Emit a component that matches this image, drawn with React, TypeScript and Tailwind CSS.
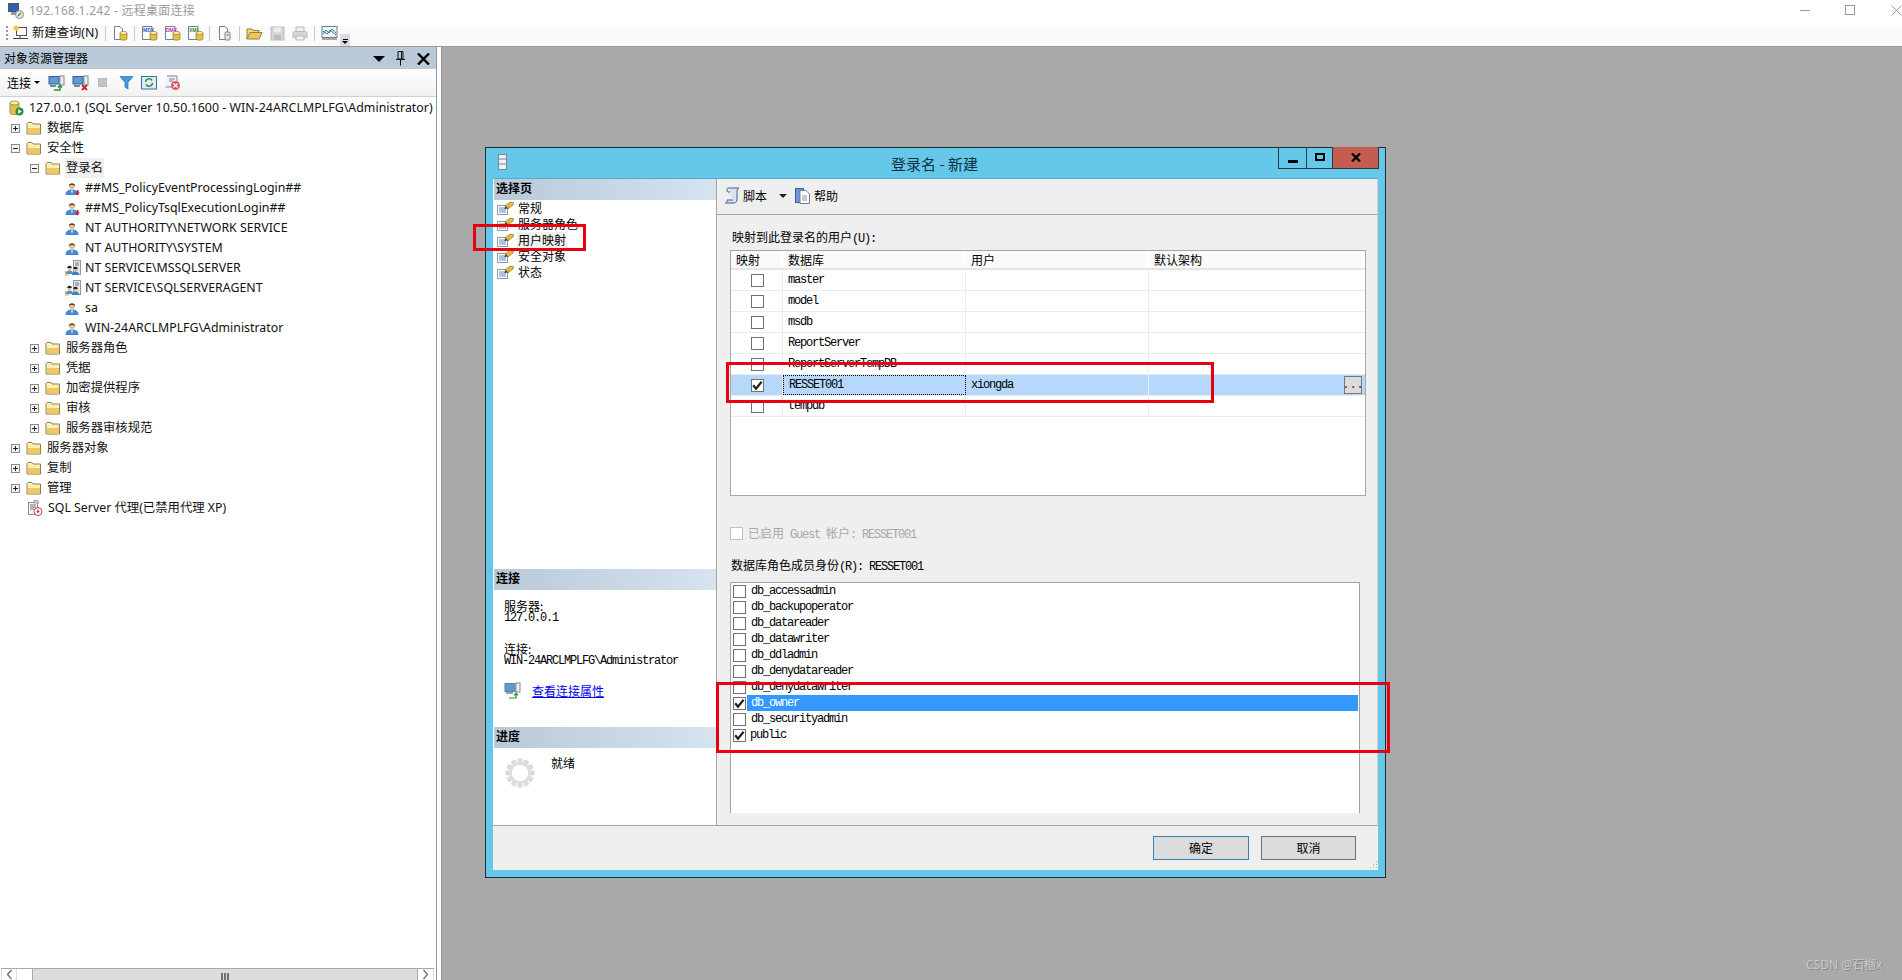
import React from "react";

const CJK = "font-['Noto_Sans_CJK_SC',sans-serif] text-[12px] leading-[16px] text-black";
const TREE = "font-['Noto_Sans','Noto_Sans_CJK_SC',sans-serif] text-[12.35px] leading-[20px] text-[#111] whitespace-nowrap";
const MONO = "font-['Liberation_Mono',monospace] text-[12px] tracking-[-1.2px]";

function Folder() {
  return (
    <svg width="16" height="14" viewBox="0 0 16 14" className="shrink-0">
      <path d="M1 3V2.5L2 1.5H6L7 3H14.5V13H1Z" fill="#fff4c4" stroke="#8f7f45" />
      <rect x="2" y="4" width="12" height="8.5" fill="#eec862" />
      <rect x="2" y="4" width="12" height="3" fill="#fbeeb0" />
    </svg>
  );
}

function Expander({ open }: { open?: boolean }) {
  return (
    <svg width="9" height="9" viewBox="0 0 9 9" className="shrink-0">
      <rect x="0.5" y="0.5" width="8" height="8" fill="#f4f4f4" stroke="#8a8a8a" />
      <path d="M2 4.5H7" stroke="#222" />
      {!open && <path d="M4.5 2V7" stroke="#222" />}
    </svg>
  );
}

function User({ arrow }: { arrow?: boolean }) {
  return (
    <svg width="15" height="15" viewBox="0 0 15 15" className="shrink-0">
      <path d="M1 13.5C1 10 3.5 9 7 9s6 1 6 4.5Z" fill="#3f8fdc" stroke="#2a64a8" strokeWidth="0.7" />
      <path d="M6 9.5L7 12.5L8 9.5Z" fill="#fff" />
      <circle cx="7" cy="5" r="3" fill="#e9b98c" />
      <path d="M3.8 5C3.8 1.5 10.2 1.5 10.2 5L8.5 3.8H5.5Z" fill="#2a1d12" />
      {arrow && <path d="M12 9V11.5H10L12.5 14.5L15 11.5H13.5V9Z" fill="#c8202c" />}
    </svg>
  );
}

function GroupUser() {
  return (
    <svg width="16" height="16" viewBox="0 0 16 16" className="shrink-0">
      <rect x="8.5" y="0.5" width="7" height="14" fill="#e4e8ee" stroke="#8d97a5" />
      <path d="M10 3H14M10 5H14" stroke="#6d7a8a" />
      <path d="M0.5 15V11L0.5 15H4" stroke="#e3b23a" strokeWidth="1.2" fill="none" />
      <path d="M1 14C1 11 3 10.5 4.5 10.5S8 11 8 14Z" fill="#4a93d8" />
      <circle cx="4.5" cy="8" r="2.2" fill="#e9b98c" />
      <path d="M2.3 8C2.3 5 6.7 5 6.7 8Z" fill="#2a1d12" />
      <path d="M7 15C7 12 9 11.5 10.5 11.5S14 12 14 15Z" fill="#3a7fc4" />
      <circle cx="10.5" cy="9" r="2.2" fill="#e9b98c" />
      <path d="M8.3 9C8.3 6 12.7 6 12.7 9Z" fill="#2a1d12" />
    </svg>
  );
}

function ServerIcon() {
  return (
    <svg width="15" height="16" viewBox="0 0 15 16" className="shrink-0">
      <path d="M1 3V13C1 15 10 15 10 13V3Z" fill="#e5c04a" stroke="#94802f" strokeWidth="0.8" />
      <ellipse cx="5.5" cy="3" rx="4.5" ry="2" fill="#fbeeb0" stroke="#94802f" strokeWidth="0.8" />
      <circle cx="10.5" cy="11.5" r="4" fill="#2f8f3a" />
      <path d="M9.2 9.3L12.7 11.5L9.2 13.7Z" fill="#fff" />
    </svg>
  );
}

function AgentIcon() {
  return (
    <svg width="16" height="16" viewBox="0 0 16 16" className="shrink-0">
      <rect x="1.5" y="2.5" width="9" height="12" fill="#f2f2f2" stroke="#8d8d8d" />
      <path d="M3 5H9M3 7H9M3 9H7" stroke="#777" />
      <path d="M7 0.5H11L12 3H7Z" fill="#d8d8d8" stroke="#888" strokeWidth="0.7" />
      <circle cx="11" cy="11.5" r="4" fill="#fff" stroke="#b44" />
      <path d="M11 9V12M9.8 11L11 13L12.2 11Z" fill="#c8202c" stroke="#c8202c" strokeWidth="0.6" />
    </svg>
  );
}

function PageIcon() {
  return (
    <svg width="17" height="14" viewBox="0 0 17 14" className="shrink-0">
      <rect x="0.5" y="4.5" width="10" height="9" fill="#fff" stroke="#8c97a5" />
      <path d="M2 7H9M2 9H9M2 11H9" stroke="#5d88c0" />
      <path d="M8 5L13 1L16.5 1.5L16 4L11 8Z" fill="#e7b83e" stroke="#77683a" strokeWidth="0.6" />
      <path d="M7 8L9 5L11 7.5Z" fill="#444" />
    </svg>
  );
}

function Check() {
  return (
    <svg width="13" height="13" viewBox="0 0 13 13" className="block">
      <path d="M2.2 6.3L5 9.8L10.6 2.8" fill="none" stroke="#222" strokeWidth="2.2" />
    </svg>
  );
}

function Checkbox({ checked, disabled }: { checked?: boolean; disabled?: boolean }) {
  return (
    <span className={`block w-[13px] h-[13px] shrink-0 border bg-white box-border ${disabled ? "border-[#c0c0c0]" : "border-[#707070]"}`}>
      {checked && <span className="block -m-px"><Check /></span>}
    </span>
  );
}

function TreeRow({ indent, icon, text, open, expander, hover }: { indent: number; icon: React.ReactNode; text: string; open?: boolean; expander?: boolean; hover?: boolean }) {
  return (
    <div className="h-[20px] flex items-center" style={{ paddingLeft: indent }}>
      {expander ? <span className="w-[15px] flex items-center"><Expander open={open} /></span> : null}
      {icon}
      <span className={`${TREE} ml-[4px] px-[1px] ${hover ? "bg-[#f0f0f0]" : ""}`}>{text}</span>
    </div>
  );
}

function DocDb() {
  return (
    <svg width="16" height="16" viewBox="0 0 16 16">
      <path d="M2.5 1.5H8L10.5 4V14.5H2.5Z" fill="#fff" stroke="#6d7f95" />
      <path d="M8 8V14C8 15.5 15 15.5 15 14V8Z" fill="#e8c040" stroke="#8c7a30" strokeWidth="0.7" />
      <ellipse cx="11.5" cy="8" rx="3.5" ry="1.6" fill="#fbeeb0" stroke="#8c7a30" strokeWidth="0.7" />
    </svg>
  );
}

function QueryIcon({ label, color }: { label: string; color: string }) {
  return (
    <svg width="17" height="16" viewBox="0 0 17 16">
      <path d="M1.5 1.5H11V14.5H1.5Z" fill="#fff" stroke="#6d7f95" />
      <text x="2" y="7" fontSize="5" fontWeight="700" fill={color} fontFamily="Liberation Sans, sans-serif">{label}</text>
      <path d="M9 8V14C9 15.5 16 15.5 16 14V8Z" fill="#e8c040" stroke="#8c7a30" strokeWidth="0.7" />
      <ellipse cx="12.5" cy="8" rx="3.5" ry="1.6" fill="#fbeeb0" stroke="#8c7a30" strokeWidth="0.7" />
    </svg>
  );
}

function TopToolbar() {
  const Sep = () => <span className="block w-px h-[15px] bg-[#c8c8c8]" />;
  return (
    <div className="h-[20px] bg-[#fafafa] flex items-center relative pb-[6px]">
      <span className="ml-[6px] w-[2px] h-[14px] border-l-2 border-dotted border-[#999]" />
      <svg width="17" height="16" viewBox="0 0 17 16" className="ml-[4px]">
        <rect x="4.5" y="2.5" width="10" height="8" fill="#fff" stroke="#555" />
        <path d="M1 13.5H16M8 11V13" stroke="#444" />
        <circle cx="4" cy="3" r="2.6" fill="#f5c83a" />
      </svg>
      <span className={`${TREE} ml-[3px] leading-[14px]`}>新建查询(N)</span>
      <span className="ml-[7px]"><Sep /></span>
      <span className="ml-[6px] flex"><DocDb /></span>
      <span className="ml-[6px]"><Sep /></span>
      <span className="ml-[6px] flex gap-[6px]">
        <QueryIcon label="MDX" color="#2a58c0" />
        <QueryIcon label="DMX" color="#c02aa8" />
        <QueryIcon label="XML" color="#2a8a40" />
      </span>
      <span className="ml-[5px]"><Sep /></span>
      <svg width="16" height="16" viewBox="0 0 16 16" className="ml-[6px]">
        <path d="M3.5 1.5H9L11.5 4V14.5H3.5Z" fill="#fff" stroke="#6d7f95" />
        <rect x="9" y="7" width="5" height="8" rx="1" fill="#dfe5ec" stroke="#7d8896" />
        <rect x="10.5" y="9" width="2" height="2" fill="#d89a20" />
      </svg>
      <span className="ml-[7px]"><Sep /></span>
      <svg width="17" height="15" viewBox="0 0 17 15" className="ml-[6px]">
        <path d="M1 13V3H6L7 4.5H13V7" fill="#f4d97c" stroke="#8f7f45" />
        <path d="M1 13L4 6.5H16L13 13Z" fill="#f2c75a" stroke="#8f7f45" />
      </svg>
      <svg width="15" height="15" viewBox="0 0 15 15" className="ml-[7px]">
        <rect x="1" y="1" width="13" height="13" fill="#d5d5d5" stroke="#bbb" />
        <rect x="4" y="1.5" width="7" height="5" fill="#eee" />
        <rect x="4" y="9" width="7" height="5" fill="#bdbdbd" />
      </svg>
      <svg width="16" height="15" viewBox="0 0 16 15" className="ml-[7px]">
        <rect x="4" y="1" width="8" height="5" fill="#eee" stroke="#bbb" />
        <rect x="1" y="5.5" width="14" height="6.5" rx="1.5" fill="#d4d4d4" stroke="#bbb" />
        <rect x="4" y="10" width="8" height="4" fill="#f2f2f2" stroke="#bbb" />
      </svg>
      <span className="ml-[6px]"><Sep /></span>
      <svg width="17" height="16" viewBox="0 0 17 16" className="ml-[6px]">
        <rect x="1" y="1.5" width="15" height="11" fill="#f2f6fb" stroke="#6d7f95" />
        <path d="M2 9L5 5L8 8L11 4L15 8" stroke="#2f9a40" fill="none" />
        <path d="M2 6L6 9L9 5L15 10" stroke="#3a6ac0" fill="none" />
        <path d="M1 14H16" stroke="#555" />
      </svg>
      <span className="absolute left-[340px] top-[8px] w-[10px] h-[12px] bg-[#dcdcdc] flex flex-col items-center justify-end pb-[2px]">
        <span className="block w-[5px] h-px bg-black mb-px" />
        <span className="block w-0 h-0 border-x-[3px] border-t-[3px] border-x-transparent border-t-black" />
      </span>
    </div>
  );
}

function ExplorerToolbar() {
  return (
    <div className="h-[28px] bg-linear-to-b from-white to-[#f2f2f2] border-b border-[#d0d0d0] flex items-center pl-[7px]">
      <span className={`${CJK}`}>连接</span>
      <span className="ml-[3px] w-0 h-0 border-x-[3px] border-t-[3px] border-x-transparent border-t-black" />
      <svg width="17" height="16" viewBox="0 0 17 16" className="ml-[8px]">
        <rect x="1" y="1.5" width="10" height="7.5" fill="#5f9ad8" stroke="#3f5f8f" />
        <rect x="12" y="1" width="4" height="9" fill="#eef0f3" stroke="#7d8896" />
        <path d="M2 11H8" stroke="#7d8896" strokeWidth="2" />
        <path d="M6 15H12V11M10 12.5L12 10L14 12.5" stroke="#1f9a30" fill="none" strokeWidth="1.4" />
      </svg>
      <svg width="17" height="16" viewBox="0 0 17 16" className="ml-[7px]">
        <rect x="1" y="1.5" width="10" height="7.5" fill="#5f9ad8" stroke="#3f5f8f" />
        <rect x="12" y="1" width="4" height="9" fill="#eef0f3" stroke="#7d8896" />
        <path d="M2 11H8" stroke="#7d8896" strokeWidth="2" />
        <path d="M10 10L15 15M15 10L10 15" stroke="#d0202c" strokeWidth="1.8" />
      </svg>
      <span className="ml-[9px] w-[9px] h-[9px] bg-[#c4c4c4] border border-[#bbb]" />
      <svg width="15" height="15" viewBox="0 0 15 15" className="ml-[12px]">
        <path d="M1 1.5H14L9 7.5V14L6 12V7.5Z" fill="#3c9ce6" stroke="#2f6fa8" strokeWidth="0.7" />
      </svg>
      <svg width="16" height="15" viewBox="0 0 16 15" className="ml-[7px]">
        <rect x="0.5" y="1.5" width="15" height="12.5" fill="#dcecfa" stroke="#3f6f9f" />
        <path d="M4.5 7A3.5 3.5 0 0 1 11 5.5M11.5 8A3.5 3.5 0 0 1 5 9.5" stroke="#2f8f30" fill="none" strokeWidth="1.5" />
      </svg>
      <svg width="17" height="16" viewBox="0 0 17 16" className="ml-[7px]">
        <path d="M3 1H13V12H1.5" fill="#eef1f5" stroke="#7d8896" />
        <path d="M5 4H11M5 6H9" stroke="#7d8896" />
        <circle cx="11.5" cy="10.5" r="4.5" fill="#e05a62" />
        <path d="M9.5 8.5L13.5 12.5M13.5 8.5L9.5 12.5" stroke="#fff" strokeWidth="1.3" />
      </svg>
    </div>
  );
}

function ObjectExplorer() {
  const logins: [string, React.ReactNode][] = [
    ["##MS_PolicyEventProcessingLogin##", <User arrow />],
    ["##MS_PolicyTsqlExecutionLogin##", <User arrow />],
    ["NT AUTHORITY\\NETWORK SERVICE", <User />],
    ["NT AUTHORITY\\SYSTEM", <User />],
    ["NT SERVICE\\MSSQLSERVER", <GroupUser />],
    ["NT SERVICE\\SQLSERVERAGENT", <GroupUser />],
    ["sa", <User />],
    ["WIN-24ARCLMPLFG\\Administrator", <User />],
  ];
  return (
    <aside className="w-[442px] shrink-0 flex bg-white h-full">
      <div className="w-[437px] border-r border-[#8d99a6] flex flex-col relative">
        <div className="h-[22px] bg-[#b9c9d8] flex items-center pl-[4px] relative pb-[1px]">
          <span className={CJK}>对象资源管理器</span>
          <span className="absolute left-[373px] top-[9px] w-0 h-0 border-x-[6px] border-t-[6px] border-x-transparent border-t-black" />
          <svg width="11" height="16" viewBox="0 0 11 16" className="absolute left-[395px] top-[3px]">
            <path d="M3 1.5H8V9H3ZM1 9.5H10M5.5 10V15.5M6.5 2V9" stroke="#111" fill="none" />
          </svg>
          <svg width="13" height="12" viewBox="0 0 13 12" className="absolute left-[417px] top-[6px]">
            <path d="M1 0.5L12 11.5M12 0.5L1 11.5" stroke="#000" strokeWidth="2.4" />
          </svg>
        </div>
        <ExplorerToolbar />
        <div className="flex flex-col pt-[1px]">
          <div className="h-[20px] flex items-center pl-[9px]">
            <ServerIcon />
            <span className={`${TREE} ml-[5px] tracking-[0.04px]`}>127.0.0.1 (SQL Server 10.50.1600 - WIN-24ARCLMPLFG\Administrator)</span>
          </div>
          <TreeRow indent={11} expander icon={<Folder />} text="数据库" />
          <TreeRow indent={11} expander open icon={<Folder />} text="安全性" />
          <TreeRow indent={30} expander open icon={<Folder />} text="登录名" hover />
          {logins.map(([t, ic]) => (
            <div key={t} className="h-[20px] flex items-center pl-[65px]">
              <span className="w-[15px] flex justify-center">{ic}</span>
              <span className={`${TREE} ml-[5px]`}>{t}</span>
            </div>
          ))}
          {["服务器角色", "凭据", "加密提供程序", "审核", "服务器审核规范"].map((t) => (
            <TreeRow key={t} indent={30} expander icon={<Folder />} text={t} />
          ))}
          {["服务器对象", "复制", "管理"].map((t) => (
            <TreeRow key={t} indent={11} expander icon={<Folder />} text={t} />
          ))}
          <TreeRow indent={27} icon={<AgentIcon />} text="SQL Server 代理(已禁用代理 XP)" />
        </div>
        <div className="absolute left-[1px] right-[2px] bottom-0 h-[12px] flex border-t border-[#a8a8a8] bg-white">
          <span className="w-[16px] border-x border-[#ddd] text-[#666] flex justify-center">
            <svg width="7" height="11" viewBox="0 0 7 11"><path d="M5.5 1L1.5 5.5L5.5 10" stroke="#666" fill="none" strokeWidth="1.2" /></svg>
          </span>
          <span className="w-[15px]" />
          <span className="flex-1 bg-[#dcdcdc] border-x border-[#a8a8a8] flex justify-center items-start pt-[4px] gap-px">
            <span className="w-[2px] h-[8px] bg-[#707070]" />
            <span className="w-[2px] h-[8px] bg-[#707070]" />
            <span className="w-[2px] h-[8px] bg-[#707070]" />
          </span>
          <span className="w-[16px] border-r border-[#ddd] flex justify-center">
            <svg width="7" height="11" viewBox="0 0 7 11"><path d="M1.5 1L5.5 5.5L1.5 10" stroke="#666" fill="none" strokeWidth="1.2" /></svg>
          </span>
        </div>
      </div>
      <div className="w-[4px]" />
      <div className="w-px bg-[#9a9a9a]" />
    </aside>
  );
}

function SectionHeader({ children }: { children: React.ReactNode }) {
  return (
    <div className="h-[21px] shrink-0 bg-linear-to-r from-[#b9c9d8] to-[#d6e3f0] flex items-center pl-[2px] pb-[3px]">
      <span className={`${CJK} font-bold`}>{children}</span>
    </div>
  );
}

function GridRow({ name, user, checked, selected }: { name: string; user?: string; checked?: boolean; selected?: boolean }) {
  const line = "border-r border-[#ececec] h-full flex items-center";
  return (
    <div className={`h-[21px] flex border-b border-[#ececec] ${selected ? "bg-[#b5d8fc]" : ""}`}>
      <div className={`${line} w-[52px] justify-center pl-[2px]`}><Checkbox checked={checked} /></div>
      <div className={`${line} w-[183px] pl-[5px] ${MONO} text-black ${selected ? "border border-dotted border-black" : ""}`}>{name}</div>
      <div className={`${line} w-[183px] pl-[5px] ${MONO} text-black`}>{user}</div>
      <div className="flex-1 h-full flex items-center justify-end pr-[3px]">
        {selected && (
          <span className={`w-[18px] h-[18px] bg-[#dcdcdc] border border-[#777] ${MONO} flex items-center justify-center tracking-[0px] text-[#333]`}>...</span>
        )}
      </div>
    </div>
  );
}

function Dialog() {
  const pages = ["常规", "服务器角色", "用户映射", "安全对象", "状态"];
  const roles = ["db_accessadmin", "db_backupoperator", "db_datareader", "db_datawriter", "db_ddladmin", "db_denydatareader", "db_denydatawriter", "db_owner", "db_securityadmin", "public"];
  return (
    <div className="absolute left-[485px] top-[147px] w-[901px] h-[731px] bg-[#65c8ea] border border-[#1f2d33] flex flex-col">
      <div className="h-[30px] shrink-0 relative flex justify-center items-center">
        <span className="font-['Noto_Sans_CJK_SC',sans-serif] text-[15px] leading-[20px] text-[#10303f] mt-[1px] -ml-[2px]">登录名 - 新建</span>
        <svg width="10" height="16" viewBox="0 0 10 16" className="absolute left-[12px] top-[6px]">
          <rect x="0.5" y="0.5" width="8" height="15" fill="#eef1f5" stroke="#7d8896" />
          <path d="M1 5H8M1 10H8" stroke="#7d8896" />
        </svg>
        <div className="absolute right-[6px] -top-px h-[22px] flex border border-t-0 border-[#2b3a42]">
          <span className="w-[28px] border-r border-[#2b3a42] flex items-end justify-center pb-[5px]">
            <span className="w-[10px] h-[3px] bg-black" />
          </span>
          <span className="w-[26px] border-r border-[#2b3a42] flex items-center justify-center pb-[2px]">
            <span className="w-[10px] h-[8px] border-2 border-black" />
          </span>
          <span className="w-[45px] bg-[#c45c50] flex items-center justify-center">
            <svg width="10" height="9" viewBox="0 0 10 9"><path d="M1 0.5L9 8.5M9 0.5L1 8.5" stroke="#000" strokeWidth="2.2" /></svg>
          </span>
        </div>
      </div>

      <div className="flex-1 mx-[7px] mb-[7px] flex flex-col bg-[#efefef] relative">
        <div className="h-[648px] flex shrink-0 border-t border-[#5aa8c8] border-b-0">
          <div className="w-[224px] shrink-0 bg-white border-r border-b border-[#a6a6a6] flex flex-col pl-px">
            <SectionHeader>选择页</SectionHeader>
            <div className="flex flex-col">
              {pages.map((p, i) => (
                <div key={p} className="h-[16px] flex items-center pl-[3px]">
                  <PageIcon />
                  <span className={`${CJK} ml-[3px] px-[1px] ${i === 2 ? "bg-[#f0f0f0]" : ""}`}>{p}</span>
                </div>
              ))}
            </div>
            <div className="flex-1" />
            <SectionHeader>连接</SectionHeader>
            <div className="h-[137px] shrink-0 pl-[10px] pt-[8px] flex flex-col">
              <span className={`${CJK} h-[13px] leading-[13px]`}>服务器:</span>
              <span className={`${MONO} h-[12px] leading-[12px] text-black mt-[1px]`}>127.0.0.1</span>
              <span className={`${CJK} h-[13px] leading-[13px] mt-[17px]`}>连接:</span>
              <span className={`${MONO} h-[12px] leading-[12px] text-black mt-[1px]`}>WIN-24ARCLMPLFG\Administrator</span>
              <div className="flex items-center mt-[15px]">
                <svg width="17" height="17" viewBox="0 0 17 17">
                  <rect x="1" y="1.5" width="10" height="8" fill="#5f9ad8" stroke="#6c7f95" />
                  <rect x="12" y="1" width="4" height="9" fill="#eef0f3" stroke="#7d8896" />
                  <path d="M2 11H9" stroke="#9aa4af" strokeWidth="2" />
                  <path d="M5 16H12V12M10 13.5L12 11L14 13.5" stroke="#1f9a30" fill="none" strokeWidth="1.2" />
                </svg>
                <a className="ml-[11px] font-['Noto_Sans_CJK_SC',sans-serif] text-[12px] leading-[16px] text-[#0000ee] underline">查看连接属性</a>
              </div>
            </div>
            <SectionHeader>进度</SectionHeader>
            <div className="h-[77px] shrink-0 pl-[11px] pt-[10px] flex items-start">
              <svg width="30" height="30" viewBox="0 0 30 30">
                {Array.from({ length: 12 }).map((_, i) => (
                  <rect key={i} x="12.5" y="0.5" width="5" height="6.5" rx="1" fill="#dcdcdc" transform={`rotate(${i * 30} 15 15)`} />
                ))}
              </svg>
              <span className={`${CJK} ml-[16px] mt-[-3px]`}>就绪</span>
            </div>
          </div>

          <div className="flex-1 min-w-0 flex flex-col border-r border-[#cfcfcf] border-b-[#a6a6a6] border-b">
            <div className="h-[36px] shrink-0 border-b border-[#a6a6a6] flex items-center pl-[7px] pb-[2px]">
              <svg width="17" height="17" viewBox="0 0 17 17">
                <path d="M4 1H15L13 3V13C13 15 11 16 9 16H1.5C3 15.5 3.5 14 3 13H9" fill="#d6e3f2" stroke="#42618c" />
                <path d="M4 1C2.5 1 2.5 4 4 5H6" fill="none" stroke="#42618c" />
              </svg>
              <span className={`${CJK} ml-[2px]`}>脚本</span>
              <span className="ml-[12px] w-0 h-0 border-x-[4px] border-t-[4px] border-x-transparent border-t-[#222]" />
              <svg width="16" height="17" viewBox="0 0 16 17" className="ml-[8px]">
                <rect x="0.5" y="1.5" width="8" height="14" fill="#6f95d8" stroke="#3f5f9c" />
                <path d="M5 3.5H11L14.5 7V16.5H5Z" fill="#fff" stroke="#6d7f95" />
                <path d="M7 9H12M7 11H12M7 13H12" stroke="#8a97a8" />
              </svg>
              <span className={`${CJK} ml-[3px]`}>帮助</span>
            </div>

            <div className="flex-1 flex flex-col pl-[13px]">
              <div className={`${CJK} h-[16px] mt-[15px] pl-[2px] -translate-y-px`}>映射到此登录名的用户<span className={MONO}>(U):</span></div>
              <div className="w-[636px] h-[246px] mt-[4px] bg-white border border-[#a6a6a6] flex flex-col">
                <div className="h-[19px] shrink-0 flex border-b-2 border-[#e5e5e5]">
                  {([["映射", "w-[52px]"], ["数据库", "w-[183px]"], ["用户", "w-[183px]"], ["默认架构", "flex-1"]] as [string, string][]).map(([t, w]) => (
                    <div key={t} className={`${w} bg-[#fafafa] border-r-2 border-white pl-[5px] flex items-center ${CJK}`}>{t}</div>
                  ))}
                </div>
                <GridRow name="master" />
                <GridRow name="model" />
                <GridRow name="msdb" />
                <GridRow name="ReportServer" />
                <GridRow name="ReportServerTempDB" />
                <GridRow name="RESSET001" user="xiongda" checked selected />
                <GridRow name="tempdb" />
              </div>

              <div className="h-[13px] mt-[31px] flex items-center">
                <Checkbox disabled />
                <span className="ml-[5px] font-['Noto_Sans_CJK_SC',sans-serif] text-[12px] leading-[16px] text-[#a8a8a8] whitespace-pre">已启用<span className={MONO}> Guest </span>帐户<span className={MONO}>: RESSET001</span></span>
              </div>
              <div className={`${CJK} h-[16px] mt-[18px] pl-[1px] whitespace-pre -translate-y-px`}>数据库角色成员身份<span className={MONO}>(R): RESSET001</span></div>

              <div className="w-[630px] h-[231px] mt-[8px] bg-white border border-b-0 border-[#a0a0a8] pl-[2px] pr-[1px] flex flex-col">
                {roles.map((r) => {
                  const on = r === "db_owner" || r === "public";
                  const sel = r === "db_owner";
                  return (
                    <div key={r} className="h-[16px] flex items-center shrink-0">
                      <Checkbox checked={on} />
                      <span className={`ml-px flex-1 h-[16px] flex items-center ${r === "public" ? "pl-[3px]" : "pl-[4px]"} ${MONO} ${sel ? "bg-[#3399ff] text-white" : "text-black"}`}>{r}</span>
                    </div>
                  );
                })}
              </div>
            </div>
          </div>
        </div>

        <div className="flex-1 flex justify-end items-start pt-[10px] pr-[22px] gap-[12px] relative">
          <button className={`w-[96px] h-[24px] bg-[#dcdcdc] border border-[#3c7fb1] flex items-center justify-center ${CJK}`}>确定</button>
          <button className={`w-[95px] h-[24px] bg-[#dcdcdc] border border-[#707070] flex items-center justify-center ${CJK}`}>取消</button>
          <svg width="10" height="10" viewBox="0 0 10 10" className="absolute right-0 bottom-0">
            <path d="M8 1.5H9M8 4.5H9M5 4.5H6M8 7.5H9M5 7.5H6M2 7.5H3" stroke="#b0b0b0" />
          </svg>
        </div>
      </div>
    </div>
  );
}

export default function App() {
  return (
    <div className="w-[1902px] h-[980px] relative overflow-hidden bg-white flex flex-col">
      <div className="h-[26px] shrink-0 bg-white flex items-center relative">
        <svg width="16" height="16" viewBox="0 0 16 16" className="ml-[8px] -mt-[5px]">
          <rect x="0.5" y="0.5" width="10" height="8" fill="#2f5fb8" stroke="#555" />
          <rect x="3" y="9" width="9" height="3" fill="#999" />
          <circle cx="11.5" cy="11.5" r="4" fill="#e8e8e8" stroke="#888" />
          <path d="M10 13L13 10" stroke="#2f9a40" strokeWidth="1.4" />
        </svg>
        <span className="ml-[5px] font-['Noto_Sans','Noto_Sans_CJK_SC',sans-serif] text-[12px] text-[#9a9a9a] leading-[20px] tracking-[0.25px] -mt-[5px]">192.168.1.242 - 远程桌面连接</span>
        <span className="absolute left-[1800px] top-[10px] w-[10px] h-px bg-[#999]" />
        <span className="absolute left-[1845px] top-[5px] w-[10px] h-[10px] border border-[#999]" />
        <svg width="11" height="11" viewBox="0 0 11 11" className="absolute left-[1891px] top-[5px]">
          <path d="M0.5 0.5L10.5 10.5M10.5 0.5L0.5 10.5" stroke="#999" />
        </svg>
      </div>
      <TopToolbar />
      <main className="flex-1 min-h-0 flex border-t border-[#9a9a9a] bg-[#a9a9a9]">
        <ObjectExplorer />
        <div className="flex-1" />
      </main>
      <Dialog />

      <div className="absolute left-[473px] top-[224px] w-[113px] h-[27px] border-[3px] border-[#e60012]" />
      <div className="absolute left-[726px] top-[362px] w-[488px] h-[41px] border-[3px] border-[#e60012]" />
      <div className="absolute left-[716px] top-[682px] w-[674px] h-[71px] border-[3px] border-[#e60012]" />
      <span className="absolute left-[1806px] top-[955px] font-['Noto_Sans','Noto_Sans_CJK_SC',sans-serif] text-[12px] leading-[20px] text-[#c9c9c9] [text-shadow:1px_1px_0_#888] whitespace-nowrap">CSDN @石榴x</span>
    </div>
  );
}
